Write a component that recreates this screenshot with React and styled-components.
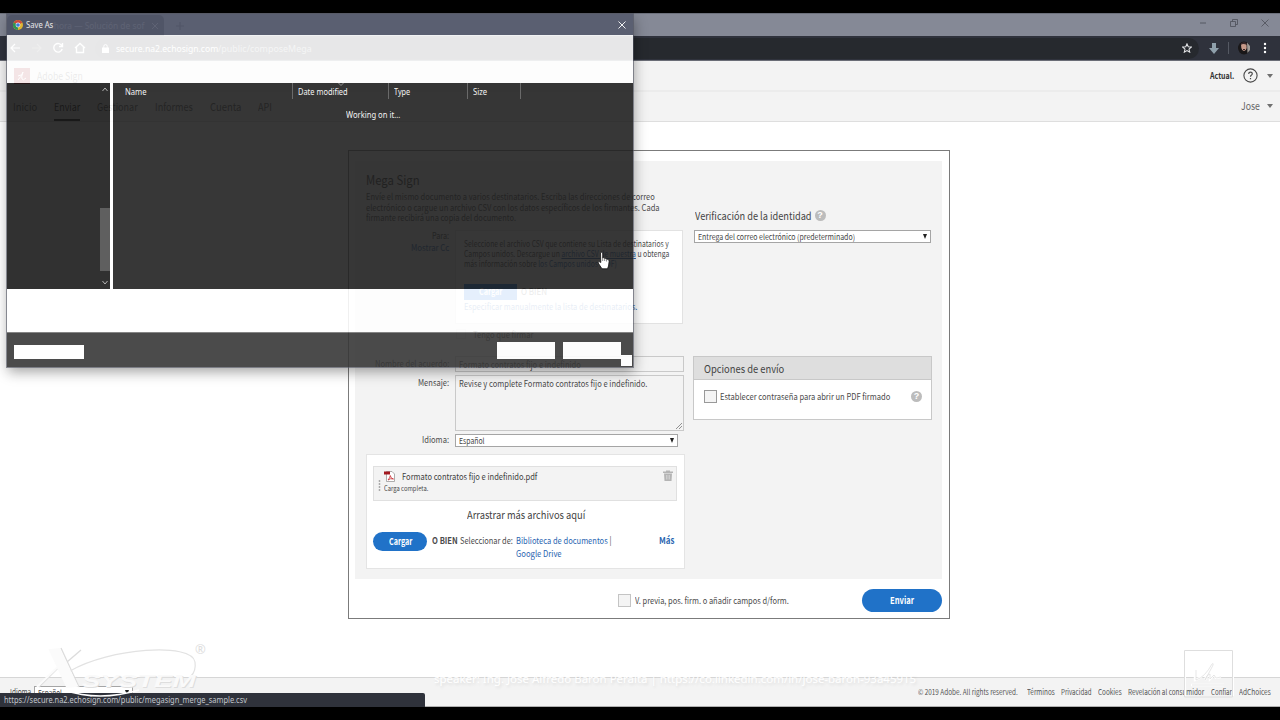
import React, { useLayoutEffect, useRef, useState } from "react";
import styled, { createGlobalStyle } from "styled-components";

const Global = createGlobalStyle`
  * { box-sizing: border-box; }
  html, body { margin: 0; padding: 0; background: #000; overflow: hidden; }
  body { font-family: "Noto Sans CJK SC", "Noto Sans", sans-serif; color: #4b4b4b; font-size: 9px; line-height: 11px; }
`;

/* One line of text condensed to a given width */
const Slot = styled.span`
  display: inline-block;
  flex: none;
  width: ${(p) => p.$w}px;
  white-space: nowrap;
  text-align: left;
  vertical-align: top;
  font-size: ${(p) => p.$s || 9}px;
  font-weight: ${(p) => (p.$b ? 700 : 400)};
  color: ${(p) => p.$c || "inherit"};
`;
const Run = styled.span`
  display: inline-block;
  transform-origin: 0 50%;
`;
function Txt({ w, children, ...rest }) {
  const ref = useRef(null);
  const [k, setK] = useState(1);
  useLayoutEffect(() => {
    setK(w / ref.current.offsetWidth);
  }, [w]);
  return (
    <Slot $w={w} {...rest}>
      <Run ref={ref} style={{ transform: `scaleX(${k})` }}>{children}</Run>
    </Slot>
  );
}

const Screen = styled.div`
  position: relative;
  width: 1280px;
  height: 720px;
  padding: 13px 0;
  display: flex;
  flex-direction: column;
  background: #000;
  overflow: hidden;
`;

/* Browser chrome */
const TabStrip = styled.div`
  height: 23px;
  flex: none;
  display: flex;
  align-items: stretch;
  padding: 1px 10px 0 7px;
  background: #858996;
  border-top: 1px solid #6c707b;
  font-family: "Noto Sans", sans-serif;
`;
const Tab = styled.div`
  width: 157px;
  display: flex;
  align-items: center;
  justify-content: space-between;
  padding: 0 4px 0 42px;
  border-radius: 5px 5px 0 0;
  background: #2f323a;
  color: #a4a7af;
`;
const NewTab = styled.div`
  width: 32px;
  display: flex;
  align-items: center;
  justify-content: center;
`;
const WindowButtons = styled.div`
  margin-left: auto;
  width: 72px;
  display: flex;
  align-items: center;
  justify-content: space-between;
  padding-bottom: 5px;
`;
const Toolbar = styled.div`
  height: 25px;
  flex: none;
  display: flex;
  align-items: center;
  background: #2f323c;
  border-bottom: 1px solid #6a6d76;
  padding: 0 13px 0 9px;
  font-family: "Noto Sans", sans-serif;
`;
const NavIcons = styled.div`
  display: flex;
  align-items: center;
  gap: 9.5px;
  width: 86px;
`;
const Omnibox = styled.div`
  height: 21px;
  flex: 1;
  display: flex;
  align-items: center;
  border-radius: 11px;
  background: #26292e;
  padding: 0 7px 0 7px;
  color: #fff;
`;
const Url = styled.div`
  margin-left: 7px;
  flex: 1;
  display: flex;
`;
const Tools = styled.div`
  display: flex;
  align-items: center;
  gap: 9px;
  margin-left: 10px;
`;
const MenuDots = styled.svg`
  margin-left: 4px;
`;

/* Site header */
const Brand = styled.div`
  height: 31px;
  flex: none;
  display: flex;
  align-items: center;
  gap: 7px;
  padding: 0 7px 0 14px;
  background: #f3f3f3;
  border-bottom: 2px solid #ececec;
`;
const HelpGroup = styled.div`
  margin-left: auto;
  display: flex;
  align-items: center;
  gap: 9px;
`;
const Nav = styled.nav`
  height: 30px;
  flex: none;
  display: flex;
  align-items: center;
  background: #f3f3f3;
  border-bottom: 1px solid #dedede;
  padding: 0 7px 0 13px;
  gap: 17px;
`;
const NavItem = styled.div`
  height: 29px;
  padding-top: 8px;
  line-height: 12px;
  color: ${(p) => (p.$active ? "#222" : "#555")};
  border-bottom: 2px solid ${(p) => (p.$active ? "#222" : "transparent")};
`;
const User = styled.div`
  margin-left: auto;
  display: flex;
  align-items: center;
  gap: 7px;
  padding-bottom: 2px;
  color: #666;
`;
const Caret = styled.i`
  border: 3.5px solid transparent;
  border-top: 4px solid #707070;
  border-bottom: 0;
`;

/* Main form */
const Main = styled.main`
  flex: 1;
  background: #fff;
  padding: 28px 0 0 348px;
`;
const Frame = styled.section`
  width: 602px;
  height: 469px;
  border: 1px solid #7b7b7b;
  padding: 10px 7px 0 6px;
  background: #fff;
`;
const FormPanel = styled.div`
  height: 418px;
  width: 587px;
  background: #f3f3f3;
  display: flex;
  gap: 9px;
  padding-left: 11px;
`;
const LeftCol = styled.div`
  width: 318px;
  flex: none;
  padding-top: 11px;
`;
const RightCol = styled.div`
  width: 239px;
  flex: none;
  padding-top: 48px;
`;
const Title = styled.h1`
  margin: 0;
  height: 20px;
  line-height: 15px;
  font-weight: 400;
  color: #333;
`;
const Intro = styled.div`
  height: 38px;
  display: flex;
  flex-direction: column;
  line-height: 10.6px;
`;
const Row = styled.div`
  display: flex;
  height: ${(p) => p.$h}px;
  margin-bottom: ${(p) => p.$mb || 0}px;
`;
const Label = styled.div`
  width: 83px;
  flex: none;
  margin-right: 6px;
  padding-top: ${(p) => p.$pt || 0}px;
  display: flex;
  flex-direction: column;
  align-items: flex-end;
  line-height: 12px;
`;
const RecipientBox = styled.div`
  width: 228px;
  height: 94px;
  background: #fff;
  border: 1px solid #e2e2e2;
  padding: 8px 0 0 8px;
  line-height: 10.2px;
  display: flex;
  flex-direction: column;
`;
const Link = styled.a`
  color: #2b66b1;
  text-decoration: ${(p) => (p.$u ? "underline" : "none")};
`;
const UploadRow = styled.div`
  display: flex;
  align-items: center;
  gap: 4px;
  margin: 14px 0 2px;
  height: 16px;
`;
const SquareButton = styled.div`
  width: 53px;
  height: 16px;
  background: #1473e6;
  color: #fff;
  display: flex;
  align-items: center;
  justify-content: center;
`;
const CheckLine = styled.div`
  display: flex;
  align-items: center;
  height: 16px;
  margin-bottom: 14px;
  padding-left: 90px;
  gap: 7px;
`;
const Check = styled.i`
  flex: none;
  width: ${(p) => p.$s || 13}px;
  height: ${(p) => p.$s || 13}px;
  border: 1px solid ${(p) => p.$c || "#c4c4c4"};
  background: #f4f4f4;
`;
const Field = styled.div`
  width: 229px;
  flex: none;
  height: ${(p) => p.$h}px;
  border: 1px solid #c9c9c9;
  padding: 2px 0 0 3px;
  display: flex;
  justify-content: space-between;
  line-height: 11px;
`;
const Grip = styled.svg`
  align-self: flex-end;
  width: 8px;
  height: 8px;
`;
const Select = styled.div`
  width: ${(p) => p.$w}px;
  flex: none;
  height: 13px;
  border: 1px solid #a5a5a5;
  background: #fff;
  display: flex;
  align-items: center;
  justify-content: space-between;
  padding: 0 3px;
  line-height: 11px;
  color: #444;
  &::after {
    content: "";
    border: 2.5px solid transparent;
    border-top: 5px solid #222;
    border-bottom: 0;
  }
`;
const Files = styled.div`
  width: 319px;
  height: 115px;
  background: #fff;
  border: 1px solid #e4e4e4;
  padding: 11px 6px 0;
`;
const FileItem = styled.div`
  height: 35px;
  width: 304px;
  border: 1px solid #e0e0e0;
  background: #f3f3f3;
  display: flex;
  padding: 3px 3px 0 4px;
`;
const FileBody = styled.div`
  flex: 1;
  padding-left: 3px;
`;
const FileName = styled.div`
  display: flex;
  align-items: center;
  gap: 6.5px;
  height: 13px;
  color: #3f3f3f;
`;
const DropHint = styled.div`
  height: 26px;
  line-height: 26px;
  text-align: center;
  color: #444;
`;
const Sources = styled.div`
  display: flex;
  align-items: flex-start;
  padding-top: 5px;
  line-height: 13px;
`;
const Pill = styled.div`
  width: ${(p) => p.$w}px;
  height: ${(p) => p.$h}px;
  border-radius: 12px;
  background: #2072c8;
  color: #fff;
  display: flex;
  align-items: center;
  justify-content: center;
`;
const Or = styled.div`
  display: flex;
  gap: 2px;
  margin: 2px 3px 0 5px;
`;
const SourceLinks = styled.div`
  flex: 1;
  display: flex;
  flex-direction: column;
  padding-top: 2px;
`;
const More = styled.div`
  margin: 2px 4px 0 0;
`;
const SectionTitle = styled.div`
  height: 21px;
  display: flex;
  align-items: flex-start;
  gap: 3px;
  line-height: 13px;
  padding-left: 2px;
  color: #444;
`;
const HelpDot = styled.i`
  flex: none;
  width: 11px;
  height: 11px;
  margin-top: 1px;
  border-radius: 50%;
  background: #bcbcbc;
  color: #fff;
  font: bold 9px/11px "Liberation Sans", sans-serif;
  text-align: center;
`;
const SelectWrap = styled.div`
  padding-left: 1px;
  height: 126px;
`;
const Options = styled.div`
  height: 64px;
  border: 1px solid #c8c8c8;
  background: #fff;
`;
const OptionsHead = styled.div`
  height: 23px;
  line-height: 23px;
  background: #dedede;
  border-bottom: 1px solid #c8c8c8;
  padding-left: 10px;
  color: #444;
`;
const OptionLine = styled.div`
  display: flex;
  align-items: center;
  height: 33px;
  padding: 0 9px 0 10px;
  gap: 3px;
  ${HelpDot} { margin: 0 0 0 auto; }
`;
const Actions = styled.div`
  display: flex;
  align-items: center;
  justify-content: flex-end;
  height: 43px;
  ${Pill} { margin-left: 73px; }
  ${Check} { margin-right: 4px; }
`;

/* Page footer */
const Footer = styled.footer`
  flex: none;
  height: 30px;
  background: #f3f3f3;
  border-top: 1px solid #d6d6d6;
  border-bottom: 1px solid #b0b0b0;
  padding: 8px 10px 0 10px;
  display: flex;
  align-items: flex-start;
  gap: 3px;
`;
const FooterLinks = styled.div`
  margin-left: auto;
  display: flex;
  gap: 6.5px;
  line-height: 12px;
  color: #555;
  & > :first-child { margin-right: 3px; }
`;

/* Save As window */
const Dialog = styled.div`
  position: absolute;
  left: 7px;
  top: 14px;
  width: 626px;
  height: 353px;
  opacity: 0.89;
  display: flex;
  flex-direction: column;
  font-family: "Noto Sans", sans-serif;
  background: #fff;
  box-shadow: 0 0 0 1px rgba(80, 82, 95, 0.7), 1px 5px 12px rgba(0, 0, 0, 0.4);
`;
const DialogTitle = styled.div`
  height: 21px;
  background: #555a6d;
  display: flex;
  align-items: center;
  justify-content: space-between;
  padding: 0 6px;
  color: #fff;
`;
const Caption = styled.div`
  display: flex;
  align-items: center;
  gap: 3px;
`;
const Spacer = styled.div`
  height: ${(p) => p.$h}px;
`;
const Explorer = styled.div`
  height: 206px;
  display: flex;
  gap: 3px;
`;
const Tree = styled.div`
  width: 103px;
  background: #181818;
  display: flex;
  justify-content: flex-end;
`;
const ScrollBar = styled.div`
  width: 10px;
  display: flex;
  flex-direction: column;
  align-items: center;
  padding: 4px 0 3px;
`;
const Thumb = styled.div`
  width: 10px;
  height: 63px;
  margin: 116px 0 9px;
  background: #4c4c4c;
`;
const FileList = styled.div`
  flex: 1;
  background: #1f1f1f;
  color: #f4f4f4;
`;
const Columns = styled.div`
  display: flex;
  height: 16px;
  padding-left: 7px;
`;
const Column = styled.div`
  width: ${(p) => p.$w}px;
  display: flex;
  border-right: 1px solid #5a5a5a;
  padding: 3px 0 0 4.500px;
  line-height: 12px;
`;
const SortMark = styled.svg`
  margin: -3px 0 0 -10px;
`;
const Working = styled.div`
  padding: 10px 0 0 233px;
  line-height: 12px;
`;
const DialogFooter = styled.div`
  flex: 1;
  background: #363636;
  border-top: 1px solid #777;
  display: flex;
  align-items: flex-start;
  padding: 9px 0 0 7px;
`;
const Blank = styled.div`
  width: ${(p) => p.$w}px;
  height: ${(p) => p.$h}px;
  margin: ${(p) => p.$m || 0};
  background: #fff;
`;

const Overlay = styled.svg`
  position: absolute;
  left: ${(p) => p.$x}px;
  top: ${(p) => p.$y}px;
`;
const Status = styled.div`
  position: absolute;
  left: 0;
  top: 693px;
  width: 425px;
  height: 14px;
  background: #2f323b;
  color: #c3c6cc;
  border-radius: 0 2px 0 0;
  padding-left: 4px;
  line-height: 14px;
  font-family: "Noto Sans", sans-serif;
`;
const Speaker = styled.div`
  position: absolute;
  left: 434px;
  top: 671px;
  line-height: 15px;
  font-family: "Noto Sans", sans-serif;
  color: #fff;
  text-shadow: 1px 2px 3px rgba(0, 0, 0, 0.1);
`;

const Chrome = () => (
  <svg width="10" height="10" viewBox="0 0 24 24">
    <circle cx="12" cy="12" r="12" fill="#f4c430" />
    <path d="M12 12 1.6 6A12 12 0 0 1 22.4 6z" fill="#e14b3b" />
    <path d="M12 12 1.6 6A12 12 0 0 0 12 24z" fill="#2fa257" />
    <circle cx="12" cy="12" r="5.800" fill="#fff" />
    <circle cx="12" cy="12" r="4.400" fill="#4285f4" />
  </svg>
);

const Line = ({ d, w = 10, h = 10, c = "#fff", sw = 1.2, ...r }) => (
  <svg width={w} height={h} viewBox={`0 0 ${w} ${h}`} fill="none" stroke={c} strokeWidth={sw} {...r}>
    <path d={d} />
  </svg>
);

const navItems = [
  ["Inicio", 24], ["Enviar", 26], ["Gestionar", 41], ["Informes", 38], ["Cuenta", 31], ["API", 14],
];
const footerItems = [
  ["© 2019 Adobe. All rights reserved.", 99.5], ["Términos", 27.5], ["Privacidad", 30.5], ["Cookies", 23.5],
  ["Revelación al consumidor", 76.5], ["Confiar", 21], ["AdChoices", 31.5],
];

export default function App() {
  return (
    <Screen>
      <Global />
      <TabStrip>
        <Tab>
          <Txt w={95} $s={9}>ahora — Solución de sof</Txt>
          <Line d="M2 2 8 8M8 2 2 8" c="#a9acb2" sw={1} />
        </Tab>
        <NewTab><Line d="M5 1V9M1 5H9" c="#33363f" sw={1.2} /></NewTab>
        <WindowButtons>
          <Line d="M2 5H8" c="#555862" sw={1} />
          <Line d="M1.500 3.500H6.500V8.500H1.500ZM3.500 3.500V1.500H8.500V6.500H6.500" c="#4c4f58" sw={0.8} />
          <Line d="M1.500 1.500 8.500 8.500M8.500 1.500 1.500 8.500" c="#4c4f58" sw={0.8} />
        </WindowButtons>
      </TabStrip>
      <Toolbar>
        <NavIcons>
          <Line w={12} h={12} d="M11 6H2M6 2 2 6 6 10" />
          <Line w={12} h={12} d="M1 6H10M6 2 10 6 6 10" c="#666" />
          <Line w={12} h={12} d="M10 4A4.300 4.300 0 1 0 10.200 7M10.500 1V4.500H7" sw={1.4} />
          <Line w={12} h={12} d="M1 6 6 1.500 11 6M2.500 5V10.500H9.500V5" sw={1.4} />
        </NavIcons>
        <Omnibox>
          <svg width="7" height="9" viewBox="0 0 7 9"><rect y="3.500" width="7" height="5.500" fill="#fff" /><path d="M1.800 4V2.300a1.700 1.700 0 0 1 3.400 0V4" fill="none" stroke="#fff" /></svg>
          <Url><Txt w={102} $s={9}>secure.na2.echosign.com</Txt><Txt w={94} $s={9} $c="#a5a8ad">/public/composeMega</Txt></Url>
          <svg width="10" height="10" viewBox="0 0 24 24" fill="none" stroke="#e4e5e7" strokeWidth="2.500"><path d="m12 2 3 7 7.500.6-5.700 5 1.700 7.400L12 18l-6.500 4 1.700-7.400-5.700-5L9 9z" /></svg>
        </Omnibox>
        <Tools>
          <svg width="10" height="11" viewBox="0 0 10 11"><path d="M3 0H7V5H10L5 11 0 5H3Z" fill="#8fa0ab" /></svg>
          <Line w={1} h={12} d="M.5 0V12" c="#555963" />
          <svg width="12" height="14" viewBox="0 0 12 14"><ellipse cx="6" cy="7" rx="6" ry="6.500" fill="#191718" /><path d="M9 1.500 12 5V9L9.500 12Z" fill="#a09c98" /><path d="M3 3Q6 1 8.500 3.500L8.700 7Q8 10 6 10 4 10 3.300 7Z" fill="#c79a8a" /><path d="M2.800 4Q5 2 9 4V2.500Q6-.5 3 2.500ZM5 8H7V9H5Z" fill="#38282a" /></svg>
          <MenuDots width="4" height="12" viewBox="0 0 4 12" fill="#fff"><circle cx="2" cy="2" r="1.200" /><circle cx="2" cy="6" r="1.200" /><circle cx="2" cy="10" r="1.200" /></MenuDots>
        </Tools>
      </Toolbar>

      <Brand>
        <svg width="16" height="16" viewBox="0 0 16 16"><rect width="16" height="16" fill="#a3121b" /><path d="M4 12Q7 9 9 4 7 9 8 11T12 10M4 8 7 7" fill="none" stroke="#fff" /></svg>
        <Txt w={46} $s={10}>Adobe Sign</Txt>
        <HelpGroup>
          <Txt w={24} $s={8.5} $b $c="#333">Actual.</Txt>
          <svg width="15" height="15" viewBox="0 0 15 15"><circle cx="7.500" cy="7.500" r="6.600" fill="none" stroke="#484848" strokeWidth="1.100" /><path d="M5.700 5.900Q5.700 4.200 7.500 4.200T9.300 5.800Q9.300 6.700 8.300 7.200 7.500 7.700 7.500 8.800M7.500 10V11.300" fill="none" stroke="#484848" strokeWidth="1.200" /></svg>
          <Caret />
        </HelpGroup>
      </Brand>
      <Nav>
        {navItems.map(([t, w], i) => (
          <NavItem key={t} $active={i === 1}><Txt w={w} $s={11}>{t}</Txt></NavItem>
        ))}
        <User><Txt w={19} $s={11}>Jose</Txt><Caret /></User>
      </Nav>

      <Main>
        <Frame>
          <FormPanel>
            <LeftCol>
              <Title><Txt w={54} $s={13}>Mega Sign</Txt></Title>
              <Intro>
                <Txt w={289}>Envíe el mismo documento a varios destinatarios. Escriba las direcciones de correo</Txt>
                <Txt w={294}>electrónico o cargue un archivo CSV con los datos específicos de los firmantes. Cada</Txt>
                <Txt w={150}>firmante recibirá una copia del documento.</Txt>
              </Intro>
              <Row $h={96}>
                <Label><Txt w={17}>Para:</Txt><Txt w={38} $c="#2b66b1">Mostrar Cc</Txt></Label>
                <RecipientBox>
                  <Txt w={205} $s={8.7}>Seleccione el archivo CSV que contiene su Lista de destinatarios y</Txt>
                  <Txt w={205} $s={8.7}>Campos unidos. Descargue un <Link $u>archivo CSV de muestra</Link> u obtenga</Txt>
                  <Txt w={153} $s={8.7}>más información sobre <Link>los Campos unidos (PDF)</Link></Txt>
                  <UploadRow><SquareButton><Txt w={23} $b>Cargar</Txt></SquareButton><Txt w={26}>O BIEN</Txt></UploadRow>
                  <Txt w={173}><Link>Especificar manualmente la lista de destinatarios.</Link></Txt>
                </RecipientBox>
              </Row>
              <CheckLine><Check $s={10} $c="#dcdcdc" /><Txt w={60}>Tengo que firmar</Txt></CheckLine>
              <Row $h={16} $mb={3}><Label $pt={2}><Txt w={74}>Nombre del acuerdo:</Txt></Label><Field $h={16}><Txt w={122}>Formato contratos fijo e indefinido</Txt></Field></Row>
              <Row $h={59}><Label $pt={2}><Txt w={31}>Mensaje:</Txt></Label><Field $h={56}><Txt w={188}>Revise y complete Formato contratos fijo e indefinido.</Txt><Grip viewBox="0 0 8 8" stroke="#777" strokeWidth=".8"><path d="M1 7 7 1M4 7 7 4" /></Grip></Field></Row>
              <Row $h={20}><Label><Txt w={27}>Idioma:</Txt></Label><Select $w={223}><Txt w={26} $s={8.2}>Español</Txt></Select></Row>
              <Files>
                <FileItem>
                  <Line w={3} h={30} d="M1.500 10V21" c="#aaa" sw={1.5} strokeDasharray="2 1" />
                  <FileBody>
                    <FileName>
                      <svg width="11" height="11" viewBox="0 0 11 11"><path d="M2.500.5H8L10.500 3V10.500H2.500Z" fill="#fff" stroke="#999" strokeWidth=".8" /><path d="M0 .5H6V3.500H0Z" fill="#a3181f" /><path d="M4 9Q6 7 6.300 4.500 6.500 7.500 9.500 8 6.500 7 4 9Z" fill="none" stroke="#c5292f" strokeWidth=".8" /></svg>
                      <Txt w={135}>Formato contratos fijo e indefinido.pdf</Txt>
                    </FileName>
                    <Txt w={44} $s={7.2}>Carga completa.</Txt>
                  </FileBody>
                  <svg width="10" height="11" viewBox="0 0 10 11"><path d="M3 1.500V.5H7V1.500H10V3H0V1.500ZM1 3.500H9L8.500 11H1.500Z" fill="#b4b4b4" /><path d="M3.500 5V9.500M5 5V9.500M6.500 5V9.500" stroke="#ddd" strokeWidth=".6" /></svg>
                </FileItem>
                <DropHint><Txt w={118} $s={11}>Arrastrar más archivos aquí</Txt></DropHint>
                <Sources>
                  <Pill $w={54} $h={19}><Txt w={23} $b>Cargar</Txt></Pill>
                  <Or><Txt w={25.5} $b>O BIEN</Txt><Txt w={53}>Seleccionar de:</Txt></Or>
                  <SourceLinks>
                    <Txt w={95.5}><Link>Biblioteca de documentos</Link> |</Txt>
                    <Txt w={46}><Link>Google Drive</Link></Txt>
                  </SourceLinks>
                  <More><Txt w={15} $b $c="#2b66b1">Más</Txt></More>
                </Sources>
              </Files>
            </LeftCol>
            <RightCol>
              <SectionTitle><Txt w={116.5} $s={11}>Verificación de la identidad</Txt><HelpDot>?</HelpDot></SectionTitle>
              <SelectWrap><Select $w={237}><Txt w={157} $s={8}>Entrega del correo electrónico (predeterminado)</Txt></Select></SelectWrap>
              <Options>
                <OptionsHead><Txt w={80} $s={11}>Opciones de envío</Txt></OptionsHead>
                <OptionLine><Check $c="#999" /><Txt w={170}>Establecer contraseña para abrir un PDF firmado</Txt><HelpDot>?</HelpDot></OptionLine>
              </Options>
            </RightCol>
          </FormPanel>
          <Actions>
            <Check />
            <Txt w={154}>V. previa, pos. firm. o añadir campos d/form.</Txt>
            <Pill $w={80} $h={23}><Txt w={24} $s={9.5} $b>Enviar</Txt></Pill>
          </Actions>
        </Frame>
      </Main>

      <Footer>
        <Txt w={21} $s={8}>Idioma</Txt>
        <Select $w={99}><Txt w={24} $s={8}>Español</Txt></Select>
        <FooterLinks>
          {footerItems.map(([t, w]) => <Txt key={t} w={w} $s={7.9}>{t}</Txt>)}
        </FooterLinks>
      </Footer>

      <Status><Txt w={243} $s={8.5}>https://secure.na2.echosign.com/public/megasign_merge_sample.csv</Txt></Status>

      <Dialog>
        <DialogTitle>
          <Caption><Chrome /><Txt w={27} $s={8.5}>Save As</Txt></Caption>
          <Line d="M1.500 1.500 8.500 8.500M8.500 1.500 1.500 8.500" sw={1} />
        </DialogTitle>
        <Spacer $h={48} />
        <Explorer>
          <Tree>
            <ScrollBar>
              <Line w={6} h={5} d="M.5 4 3 1 5.500 4" c="#aaa" sw={1} />
              <Thumb />
              <Line w={6} h={5} d="M.5 1 3 4 5.500 1" c="#aaa" sw={1} />
            </ScrollBar>
          </Tree>
          <FileList>
            <Columns>
              <Column $w={173}><Txt w={21.5} $s={8.2}>Name</Txt></Column>
              <Column $w={96}>
                <Txt w={50} $s={8.2}>Date modified</Txt>
                <SortMark width="6" height="4" viewBox="0 0 6 4" fill="none" stroke="#888"><path d="M.5 0 3 2.500 5.500 0" /></SortMark>
              </Column>
              <Column $w={79}><Txt w={16} $s={8.2}>Type</Txt></Column>
              <Column $w={53}><Txt w={14} $s={8.2}>Size</Txt></Column>
            </Columns>
            <Working><Txt w={54} $s={8.2}>Working on it...</Txt></Working>
          </FileList>
        </Explorer>
        <Spacer $h={43} />
        <DialogFooter>
          <Blank $w={70} $h={14} $m="3px 0 0" />
          <Blank $w={58} $h={17} $m="0 8px 0 413px" />
          <Blank $w={58} $h={17} />
          <Blank $w={11} $h={11} $m="13px 0 0" />
        </DialogFooter>
      </Dialog>

      <Overlay $x={597} $y={251} width="14" height="19" viewBox="0 0 14 19">
        <path d="M3.500 2Q4.700.5 5.700 2V7Q6.700 6 7.700 7.500 8.700 6.800 9.500 8.200 11.500 7.500 12.200 10L11.500 15 10.500 17.800H5L1.200 12Q.8 9.500 3.800 11.500Z" fill="#fff" stroke="#111" strokeWidth=".8" />
        <path d="M5.700 7V10M7.700 8V10M9.600 8.500V10.500" stroke="#333" strokeWidth=".6" />
      </Overlay>

      <Overlay $x={34} $y={640} width="180" height="60" viewBox="0 0 180 60" fill="none">
        <path d="M5 47 28 24M33 22 47 10M27 8 45 47" stroke="#dcdcdc" strokeWidth="1.300" />
        <path d="M36 31C75 8 158 2 161 22 162 29 160 33 157 36" stroke="#e2e2e2" strokeWidth="1.200" />
        <path d="M16 10 25 9 43 46 33 47ZM3 47 30 21" fill="#fbfbfb" stroke="#fbfbfb" strokeWidth="2" />
        <path d="M30 50Q65 62 105 50" stroke="#fff" strokeWidth="1.500" />
        <g fontFamily="Liberation Sans, sans-serif" fontWeight="700" fontStyle="italic" fontSize="17">
          <text x="48.500" y="48" textLength="114" lengthAdjust="spacingAndGlyphs" fill="#dedede">SYSTEM</text>
          <text x="47.700" y="47" textLength="114" lengthAdjust="spacingAndGlyphs" fill="#fafafa">SYSTEM</text>
        </g>
        <text x="161" y="14" fontFamily="Noto Sans, sans-serif" fontSize="13" fill="#dedede">®</text>
      </Overlay>
      <Speaker><Txt w={482} $s={11}>speaker: Ing. Jose Alfredo Baron Peralta | https://co.linkedin.com/in/jose-baron-93a45915</Txt></Speaker>
      <Overlay $x={1183} $y={649} width="52" height="50" viewBox="0 0 52 50" fill="none">
        <path d="M1.500 1.500H49.500V48H1.500Z" stroke="#dedede" />
        <path d="M2.500 2.500V47M50.500 0V47" stroke="#fff" />
        <path d="M12 21V31Q22 28 29 15 32 13 28 20L22 31Q24 25 27 25V30L31 26 33 29 38 28M8 36H41" stroke="#fff" strokeWidth="2.400" />
        <path d="M13 21V31Q22 28 29 15 32 13 28 20L22 31Q24 25 27 25V30L31 26 33 29 38 28M9 36H41" stroke="#dcdcdc" strokeWidth=".7" />
      </Overlay>
    </Screen>
  );
}
